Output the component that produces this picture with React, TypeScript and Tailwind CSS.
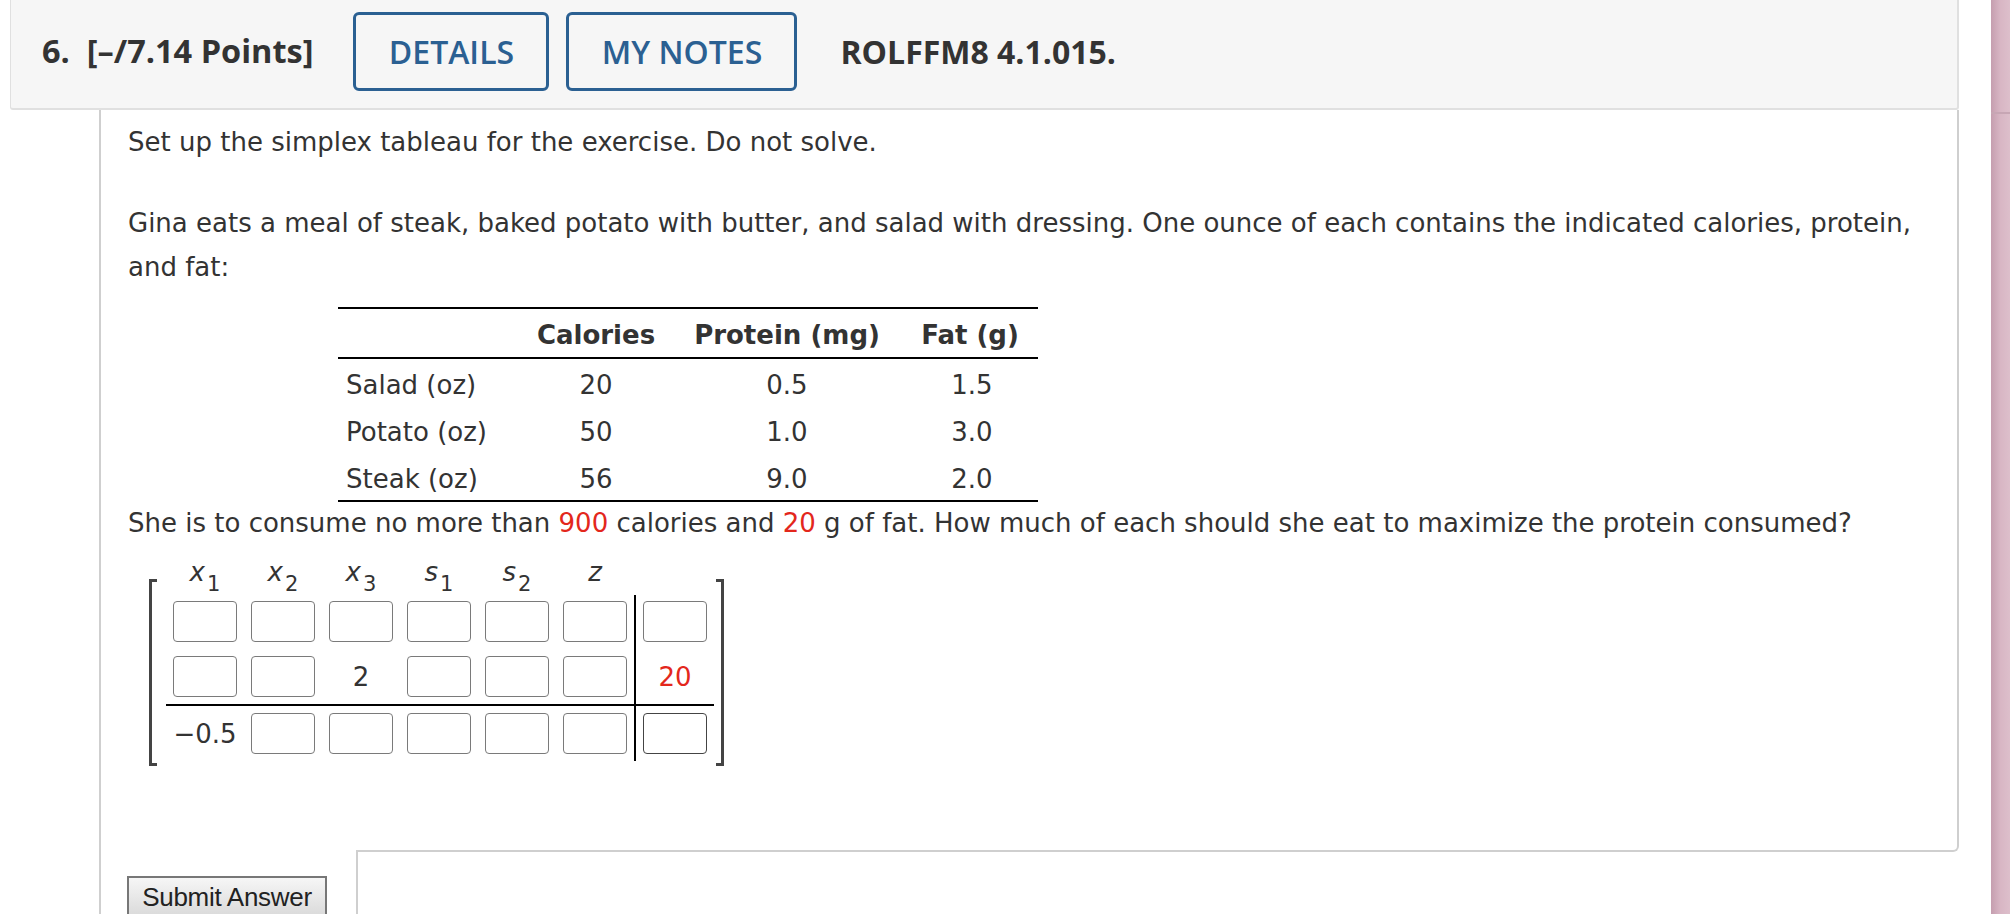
import React from "react";

const body = "font-['DejaVu_Sans',Verdana,sans-serif]";

function Cell({ children, red, dark }: { children?: React.ReactNode; red?: boolean; dark?: boolean }) {
  if (children !== undefined) {
    return (
      <div className={`flex h-[41px] w-[64px] items-center justify-center text-[26px] ${red ? "text-[#e3271c]" : "text-[#333]"}`}>
        {children}
      </div>
    );
  }
  return (
    <div
      className={`h-[41px] w-[64px] rounded-[4px] border-[1.5px] bg-white ${dark ? "border-[#444]" : "border-[#7a7a7a]"}`}
    />
  );
}

function Label({ v, s }: { v: string; s?: string }) {
  return (
    <div className="flex w-[64px] items-baseline justify-center text-[26px] leading-[31px] text-[#333]">
      <span className="italic">{v}</span>
      {s && <span className="relative top-[10px] ml-[2px] text-[21px] leading-[21px]">{s}</span>}
    </div>
  );
}

export default function App() {
  const rows = [
    ["Salad (oz)", "20", "0.5", "1.5"],
    ["Potato (oz)", "50", "1.0", "3.0"],
    ["Steak (oz)", "56", "9.0", "2.0"],
  ];
  return (
    <div className="flex h-[914px] w-[2010px] overflow-hidden bg-white">
      <div className="flex w-[1991px] flex-col pl-[10px] pr-[32px]">
        {/* Header */}
        <div className="flex h-[110px] shrink-0 items-start rounded-b-[3px] border-b-2 border-l border-r-2 border-[#e0e0e0] bg-[#f6f6f6] pl-[31px] pt-[12px] font-['Open_Sans',sans-serif] text-[#333]">
          <div className="flex h-[79px] items-center text-[32.5px] font-bold whitespace-pre">6.  [–/7.14 Points]</div>
          <div className="ml-[40px] flex h-[79px] w-[196px] items-center justify-center rounded-[6px] border-[3px] border-[#2b6092] text-[32px] font-semibold text-[#2b6092]">
            DETAILS
          </div>
          <div className="ml-[17px] flex h-[79px] w-[231px] items-center justify-center rounded-[6px] border-[3px] border-[#2b6092] text-[32px] font-semibold text-[#2b6092]">
            MY NOTES
          </div>
          <div className="ml-[43px] flex h-[79px] items-center text-[32px] font-bold">ROLFFM8 4.1.015.</div>
        </div>

        {/* Content */}
        <div className="ml-[89px] flex flex-1 flex-col border-l-2 border-[#cfcfcf]">
          <div className={`h-[734px] shrink-0 border-r-2 border-[#cfcfcf] pl-[27px] pr-[20px] pt-[10px] text-[26px] leading-[44px] text-[#333] ${body}`}>
            <p>Set up the simplex tableau for the exercise. Do not solve.</p>
            <p className="mt-[37px]">
              Gina eats a meal of steak, baked potato with butter, and salad with dressing. One ounce of each contains the indicated calories, protein,
              <br />
              and fat:
            </p>

            {/* Table */}
            <div className="ml-[210px] mt-[18px] w-[700px] border-b-2 border-t-2 border-black">
              <div className="flex h-[50px] items-center border-b-2 border-black pt-[4px] font-bold">
                <div className="w-[192px]" />
                <div className="w-[132px] text-center">Calories</div>
                <div className="w-[250px] text-center">Protein (mg)</div>
                <div className="w-[126px] pr-[10px] text-center">Fat (g)</div>
              </div>
              {rows.map((r) => (
                <div key={r[0]} className="flex h-[47px] items-center pt-[4px]">
                  <div className="w-[192px] pl-[8px]">{r[0]}</div>
                  <div className="w-[132px] text-center">{r[1]}</div>
                  <div className="w-[250px] text-center">{r[2]}</div>
                  <div className="w-[126px] pr-[6px] text-center">{r[3]}</div>
                </div>
              ))}
            </div>

            <p className="-mt-[1px]">
              She is to consume no more than <span className="text-[#e3271c]">900</span> calories and{" "}
              <span className="text-[#e3271c]">20</span> g of fat. How much of each should she eat to maximize the protein consumed?
            </p>

            {/* Matrix */}
            <div className="ml-[21px] flex flex-col">
              <div className="flex h-[34px] gap-[14px] pl-[24px] pt-[12px]">
                <Label v="x" s="1" />
                <Label v="x" s="2" />
                <Label v="x" s="3" />
                <Label v="s" s="1" />
                <Label v="s" s="2" />
                <Label v="z" />
              </div>
              <div className="flex">
                <div className="h-[187px] w-[8px] border-b-[3px] border-l-[3px] border-t-[3px] border-[#444]" />
                <div className="ml-[9px] flex flex-col pb-[5px] pt-[16px]">
                  <div className="flex">
                    <div className="flex flex-col gap-[14px] border-r-2 border-black pb-[7px] pl-[7px] pr-[7px] pt-[6px]">
                      <div className="flex gap-[14px]">
                        <Cell /><Cell /><Cell /><Cell /><Cell /><Cell />
                      </div>
                      <div className="flex gap-[14px]">
                        <Cell /><Cell /><Cell>2</Cell><Cell /><Cell /><Cell />
                      </div>
                    </div>
                    <div className="flex flex-col gap-[14px] pb-[7px] pl-[7px] pr-[7px] pt-[6px]">
                      <Cell />
                      <Cell red>20</Cell>
                    </div>
                  </div>
                  <div className="h-[2px] bg-black" />
                  <div className="flex">
                    <div className="flex gap-[14px] border-r-2 border-black py-[7px] pl-[7px] pr-[7px]">
                      <Cell>−0.5</Cell><Cell /><Cell /><Cell /><Cell /><Cell />
                    </div>
                    <div className="py-[7px] pl-[7px] pr-[7px]">
                      <Cell dark />
                    </div>
                  </div>
                </div>
                <div className="ml-[2px] h-[187px] w-[8px] border-b-[3px] border-r-[3px] border-t-[3px] border-[#444]" />
              </div>
            </div>
          </div>
          <div className="flex h-[8px] shrink-0">
            <div className="w-[255px]" />
            <div className="flex-1 rounded-br-[6px] border-b-2 border-r-2 border-[#cfcfcf]" />
          </div>
          <div className="flex flex-1">
            <div className="w-[255px] pl-[26px] pt-[24px]">
              <button className="h-[42px] w-[200px] border-2 border-[#777] bg-linear-to-b from-[#f6f6f6] to-[#dadada] font-['Liberation_Sans',Arial,sans-serif] text-[26px] leading-[34px] tracking-[-0.3px] text-[#222]">
                Submit Answer
              </button>
            </div>
            <div className="flex-1 border-l-2 border-[#cfcfcf]" />
          </div>
        </div>
      </div>
      <div className="relative w-[19px] bg-linear-to-r from-[#c59eaf] via-[#d8b6c4] to-[#ddbfcb]">
        <div className="absolute left-0 right-0 top-[112px] h-[2px] bg-[#c7a6b4]" />
      </div>
    </div>
  );
}
